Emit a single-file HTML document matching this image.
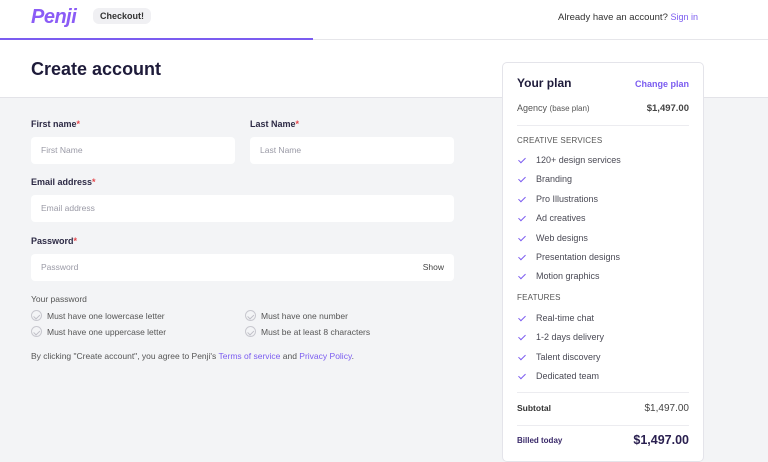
<!DOCTYPE html>
<html><head><style>
*{box-sizing:border-box;margin:0;padding:0}
body{width:768px;height:457px;overflow:hidden;background:#f3f4f6;font-family:"Liberation Sans",sans-serif;position:relative;color:#2a2540}
.a{position:absolute}
.hdr{left:0;top:0;width:768px;height:40px;background:#fff;border-bottom:1px solid #e6e6ea}
.top{left:0;top:40px;width:768px;height:58px;background:#fff;border-bottom:1px solid #e3e3e8}
.lbl{font-size:9px;font-weight:bold;color:#2d2a45}
.lbl i{color:#e5484d;font-style:normal}
.in{background:#fff;border-radius:4px;height:27px;font-size:8.5px;color:#9a9aa6;padding:0 10px;line-height:27px}
.sm{font-size:8.5px;color:#555}
.ck{width:11px;height:11px;border:1px solid #c8c8cf;border-radius:50%}
.ck:after{content:"";position:absolute;left:3px;top:1.5px;width:2.5px;height:4.5px;border:solid #c0c0c8;border-width:0 1px 1px 0;transform:rotate(45deg)}
.card{left:502px;top:62px;width:202px;height:400px;background:#fff;border:1px solid #e4e4ea;border-radius:5px}
.li{left:14px;font-size:9px;color:#4a4a55}
.li:before{content:"";position:absolute;left:3px;top:1px;width:3px;height:6px;border:solid #7c5cf0;border-width:0 1.3px 1.3px 0;transform:rotate(45deg)}
.li span{margin-left:19px}
.sec{left:14px;font-size:8px;color:#555;letter-spacing:.2px}
.hr{left:14px;width:172px;height:1px;background:#ececf0}
</style></head><body>
<div class="a hdr"></div>
<div class="a" style="left:0;top:38px;width:313px;height:3px;background:#7b5cf0"></div>
<div class="a" style="left:31px;top:6px;font-size:20px;font-weight:bold;font-style:italic;color:#8b5cf6;letter-spacing:-.5px">Penji</div>
<div class="a" style="left:93px;top:8px;padding:3px 7px;background:#f0f0f3;border-radius:6px;font-size:9px;font-weight:bold;color:#333">Checkout!</div>
<div class="a" style="left:558px;top:12px;font-size:9.5px;color:#333">Already have an account? <span style="color:#7b5cf0;font-size:9px">Sign in</span></div>
<div class="a top"></div>
<div class="a" style="left:31px;top:59px;font-size:18px;font-weight:bold;color:#1e1b3a">Create account</div>

<div class="a lbl" style="left:31px;top:119px">First name<i>*</i></div>
<div class="a lbl" style="left:250px;top:119px">Last Name<i>*</i></div>
<div class="a in" style="left:31px;top:137px;width:204px">First Name</div>
<div class="a in" style="left:250px;top:137px;width:204px">Last Name</div>
<div class="a lbl" style="left:31px;top:177px">Email address<i>*</i></div>
<div class="a in" style="left:31px;top:195px;width:423px">Email address</div>
<div class="a lbl" style="left:31px;top:236px">Password<i>*</i></div>
<div class="a in" style="left:31px;top:254px;width:423px">Password<span style="float:right;color:#444">Show</span></div>

<div class="a sm" style="left:31px;top:294px">Your password</div>
<div class="a ck" style="left:31px;top:310px"></div><div class="a sm" style="left:47px;top:311px">Must have one lowercase letter</div>
<div class="a ck" style="left:31px;top:326px"></div><div class="a sm" style="left:47px;top:327px">Must have one uppercase letter</div>
<div class="a ck" style="left:245px;top:310px"></div><div class="a sm" style="left:261px;top:311px">Must have one number</div>
<div class="a ck" style="left:245px;top:326px"></div><div class="a sm" style="left:261px;top:327px">Must be at least 8 characters</div>
<div class="a sm" style="left:31px;top:351px">By clicking "Create account", you agree to Penji's <span style="color:#7b5cf0">Terms of service</span> and <span style="color:#7b5cf0">Privacy Policy</span>.</div>

<div class="a card">
<div class="a" style="left:14px;top:13px;font-size:12px;font-weight:bold;color:#1e1b3a">Your plan</div>
<div class="a" style="right:14px;top:16px;font-size:9px;font-weight:bold;color:#7b5cf0">Change plan</div>
<div class="a" style="left:14px;top:40px;font-size:9px;color:#555">Agency <span style="font-size:8px">(base plan)</span></div>
<div class="a" style="right:14px;top:40px;font-size:9.5px;font-weight:bold;color:#444">$1,497.00</div>
<div class="a hr" style="top:62px"></div>
<div class="a sec" style="top:73px">CREATIVE SERVICES</div>
<div class="a li" style="top:92px"><span>120+ design services</span></div>
<div class="a li" style="top:111px"><span>Branding</span></div>
<div class="a li" style="top:131px"><span>Pro Illustrations</span></div>
<div class="a li" style="top:150px"><span>Ad creatives</span></div>
<div class="a li" style="top:170px"><span>Web designs</span></div>
<div class="a li" style="top:189px"><span>Presentation designs</span></div>
<div class="a li" style="top:208px"><span>Motion graphics</span></div>
<div class="a sec" style="top:230px">FEATURES</div>
<div class="a li" style="top:250px"><span>Real-time chat</span></div>
<div class="a li" style="top:269px"><span>1-2 days delivery</span></div>
<div class="a li" style="top:289px"><span>Talent discovery</span></div>
<div class="a li" style="top:308px"><span>Dedicated team</span></div>
<div class="a hr" style="top:329px"></div>
<div class="a" style="left:14px;top:340px;font-size:8.5px;font-weight:bold;color:#333">Subtotal</div>
<div class="a" style="right:14px;top:340px;font-size:10px;color:#444">$1,497.00</div>
<div class="a hr" style="top:362px"></div>
<div class="a" style="left:14px;top:373px;font-size:8px;font-weight:bold;color:#3a2a6a">Billed today</div>
<div class="a" style="right:14px;top:370px;font-size:12.5px;font-weight:bold;color:#2a2050">$1,497.00</div>
</div>
</body></html>
